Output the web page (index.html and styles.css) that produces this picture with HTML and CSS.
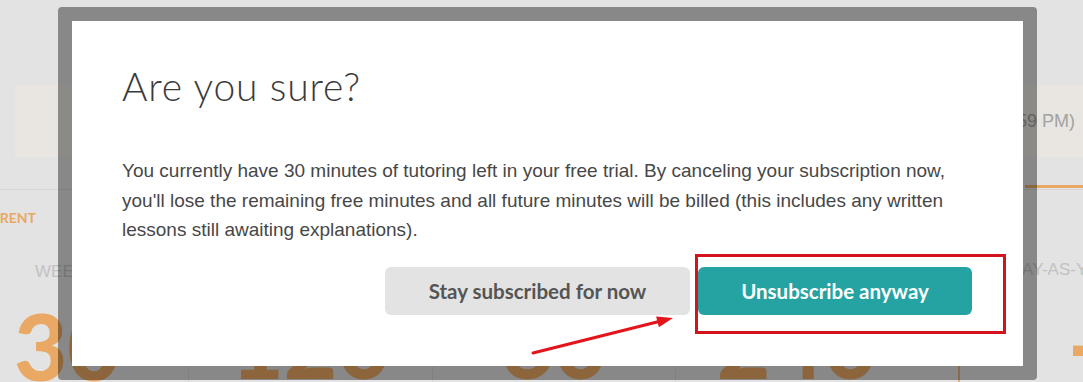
FILE: index.html
```html
<!DOCTYPE html>
<html lang="en">
<head>
<meta charset="utf-8">
<title>Are you sure?</title>
<link rel="stylesheet" href="styles.css">
</head>
<body>
<div class="page">
  <div class="banner"><span class="banner-text">Your free trial ends Mar 14 (11:59 PM)</span></div>
  <div class="tabrow"><div class="tab-underline"></div></div>
  <div class="plans">
    <div class="plan plan-1">
      <div class="tag">Current</div>
      <div class="name">Weekly</div>
      <div class="num">30</div>
    </div>
    <div class="plan plan-2">
      <div class="tag"></div>
      <div class="name">Weekly</div>
      <div class="num">120</div>
    </div>
    <div class="plan plan-3">
      <div class="tag"></div>
      <div class="name">Monthly</div>
      <div class="num">60</div>
    </div>
    <div class="plan plan-4">
      <div class="tag"></div>
      <div class="name">Monthly</div>
      <div class="num">240</div>
    </div>
    <div class="plan plan-5">
      <div class="tag"></div>
      <div class="name">Pay-as-you-go</div>
      <div class="num num-dash">-</div>
    </div>
  </div>
</div>

<div class="frame">
  <div class="modal">
    <h1 class="modal-title">Are you sure?</h1>
    <p class="modal-text">You currently have 30 minutes of tutoring left in your free trial. By canceling your subscription now, you'll lose the remaining free minutes and all future minutes will be billed (this includes any written lessons still awaiting explanations).</p>
    <div class="modal-actions">
      <button class="btn btn-stay">Stay subscribed for now</button>
      <button class="btn btn-unsub">Unsubscribe anyway</button>
    </div>
  </div>
</div>

<div class="highlight"></div>
<svg class="arrow" width="1083" height="382" viewBox="0 0 1083 382" xmlns="http://www.w3.org/2000/svg">
  <line x1="533" y1="353" x2="659" y2="321.5" stroke="#e3141c" stroke-width="3" stroke-linecap="round"/>
  <polygon points="673,318 658.9,327.2 656.1,316.4" fill="#e3141c"/>
</svg>
</body>
</html>
```

FILE: styles.css
```css
html, body {
  margin: 0;
  padding: 0;
}

body {
  width: 1083px;
  height: 382px;
  overflow: hidden;
  background: #e3e3e3;
  font-family: "Liberation Sans", Arial, sans-serif;
  position: relative;
}

/* ---------- background page ---------- */
.page {
  display: flex;
  flex-direction: column;
  width: 1083px;
  overflow: hidden;
}

.banner {
  margin: 85px 0 0 15px;
  height: 72px;
  background: #e9e6e1;
  display: flex;
  align-items: center;
  justify-content: flex-end;
  padding-right: 8px;
}

.banner-text {
  font-size: 18px;
  color: #a2a2a2;
  white-space: nowrap;
}

.tabrow {
  height: 32px;
  border-bottom: 1px solid #d6d6d6;
  display: flex;
  justify-content: flex-end;
  align-items: flex-end;
}

.tab-underline {
  width: 58px;
  height: 3px;
  margin-bottom: 1px;
  background: #e9a864;
}

.plans {
  display: flex;
  margin-left: -40px;
}

.plan {
  display: flex;
  flex-direction: column;
  flex-shrink: 0;
  border-left: 1px solid #d8d8d8;
  height: 200px;
  overflow: hidden;
}

.plan-1 { width: 228px; border-left: none; }
.plan-2 { width: 243px; }
.plan-3 { width: 242px; }
.plan-4 { width: 282px; }
.plan-5 { width: 123px; border-left: 2px solid #e2b27c; }

.tag {
  height: 16px;
  margin-top: 19px;
  font-family: Lato, sans-serif;
  font-weight: 700;
  font-size: 14px;
  text-transform: uppercase;
  color: #e9a864;
  padding-left: 11px;
  white-space: nowrap;
}

.name {
  margin-top: 37px;
  font-family: "Liberation Sans", Arial, sans-serif;
  font-size: 17px;
  text-transform: uppercase;
  color: #c2c2c2;
  text-align: center;
  height: 20px;
  white-space: nowrap;
}

.plan-1 .name {
  text-align: left;
  padding-left: 75px;
}

.plan-5 .name {
  text-align: left;
  padding-left: 52px;
}

.num {
  margin-top: 18px;
  font-family: Lato, sans-serif;
  font-weight: 900;
  font-size: 92px;
  line-height: 92px;
  color: #e9a864;
  text-align: center;
  white-space: nowrap;
}

.plan-1 .num {
  text-align: left;
  padding-left: 54px;
}

.plan-4 .num {
  padding-right: 40px;
}

.plan-5 .num {
  text-align: left;
  padding-left: 108px;
}

/* ---------- modal ---------- */
.frame {
  position: absolute;
  left: 58px;
  top: 7px;
  width: 979px;
  height: 373px;
  box-sizing: border-box;
  padding: 14px;
  background: rgba(0, 0, 0, 0.4);
  border-radius: 4px;
}

.modal {
  height: 100%;
  box-sizing: border-box;
  background: #ffffff;
  padding: 42px 51px 0 50px;
  display: flex;
  flex-direction: column;
}

.modal-title {
  margin: 0;
  font-family: Lato, sans-serif;
  font-weight: 300;
  font-size: 39px;
  letter-spacing: 0.85px;
  line-height: normal;
  color: #3b3b3b;
}

.modal-text {
  margin: 47px 0 0 0;
  font-family: "Liberation Sans", Arial, sans-serif;
  font-size: 19px;
  line-height: 29.5px;
  color: #474747;
}

.modal-actions {
  margin-top: 22px;
  display: flex;
  justify-content: flex-end;
  gap: 8px;
}

.btn {
  height: 48px;
  padding: 0;
  border: none;
  border-radius: 6px;
  font-family: Lato, sans-serif;
  font-weight: 700;
  font-size: 20.5px;
  cursor: pointer;
  white-space: nowrap;
}

.btn-stay {
  width: 305px;
  background: #e3e3e3;
  color: #555555;
}

.btn-unsub {
  width: 274px;
  background: #25a3a2;
  color: #ffffff;
}

/* ---------- annotations ---------- */
.highlight {
  position: absolute;
  left: 695px;
  top: 254px;
  width: 311px;
  height: 80px;
  box-sizing: border-box;
  border: 3px solid #d4141c;
}

.arrow {
  position: absolute;
  left: 0;
  top: 0;
  pointer-events: none;
}
```
